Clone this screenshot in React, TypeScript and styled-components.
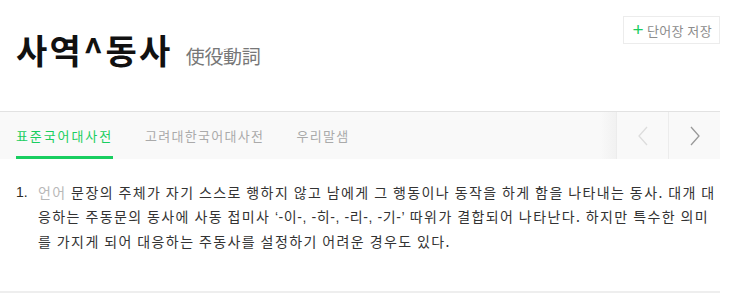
import React from 'react';
import styled, { createGlobalStyle } from 'styled-components';

const GlobalStyle = createGlobalStyle`
  html, body {
    margin: 0;
    padding: 0;
    background: #fff;
  }
  body {
    font-family: "Noto Sans CJK KR", "Noto Sans", sans-serif;
    color: #333;
  }
`;

const Page = styled.div`
  width: 720px;
`;

const Header = styled.header`
  display: flex;
  justify-content: space-between;
  align-items: flex-start;
  padding: 16px 0 0 16px;
  height: 111px;
  box-sizing: border-box;
`;

const TitleRow = styled.div`
  display: flex;
  align-items: baseline;
  padding-top: 12px;
`;

const Word = styled.h1`
  margin: 0;
  font-size: 34px;
  font-weight: 700;
  color: #111;
  line-height: 44px;
  letter-spacing: 2.3px;
`;

const Hanja = styled.span`
  margin-left: 13px;
  font-size: 19px;
  color: #777;
  letter-spacing: -0.3px;
`;

const SaveButton = styled.button`
  display: flex;
  align-items: center;
  gap: 3px;
  height: 28px;
  padding: 0 7px 0 8px;
  border: 1px solid #ececec;
  background: #fff;
  font-family: "Noto Sans CJK KR", sans-serif;
  font-size: 13px;
  letter-spacing: 0.4px;
  color: #8c8c8c;
  cursor: pointer;
`;

const Plus = styled.span`
  color: #19ce60;
  font-family: "Liberation Sans", Arial, sans-serif;
  font-size: 19px;
  line-height: 1;
  margin-top: -2px;
`;

const TabBar = styled.nav`
  display: flex;
  align-items: stretch;
  height: 47px;
  border-top: 1px solid #e2e2e2;
  background: #f9f9f9;
`;

const Tabs = styled.div`
  display: flex;
  flex: 1;
  padding-left: 16px;
  gap: 32px;
`;

const Tab = styled.a<{ $active?: boolean }>`
  display: flex;
  align-items: center;
  font-size: 13px;
  letter-spacing: ${(p) => (p.$active ? '1.9px' : '1.3px')};
  color: ${(p) => (p.$active ? '#19ce60' : '#aaa')};
  border-bottom: 3px solid ${(p) => (p.$active ? '#19ce60' : 'transparent')};
  border-top: 3px solid transparent;
  box-sizing: border-box;
  text-decoration: none;
`;

const Fade = styled.div`
  width: 16px;
  background: linear-gradient(to right, rgba(240, 240, 240, 0), rgba(236, 236, 236, 0.6));
`;

const ArrowButton = styled.button`
  width: 52px;
  border: 0;
  border-left: 1px solid #ececec;
  background: #f9f9f9;
  display: flex;
  align-items: center;
  justify-content: center;
  padding: 0;
`;

const Definition = styled.ol`
  margin: 0;
  padding: 21px 0 38px 16px;
  list-style: none;
  border-bottom: 2px solid #eee;
`;

const Item = styled.li`
  display: flex;
  font-size: 14px;
  line-height: 24px;
  color: #333;
`;

const Num = styled.span`
  flex: 0 0 22px;
  font-family: "Liberation Sans", Arial, sans-serif;
  font-size: 14px;
  color: #2e2e26;
`;

const Body = styled.p`
  margin: 0;
  flex: 1;
  letter-spacing: 1.4px;
  word-break: break-all;
`;

const Latin = styled.span`
  font-family: "Liberation Sans", "Noto Sans CJK KR", sans-serif;
  letter-spacing: 0.6px;
`;

const Tag = styled.span`
  color: #b8b8b8;
`;

const Chevron = ({ dir, color }: { dir: 'left' | 'right'; color: string }) => (
  <svg width="12" height="20" viewBox="0 0 12 20" fill="none">
    <path
      d={dir === 'left' ? 'M10 1 L2 10 L10 19' : 'M2 1 L10 10 L2 19'}
      stroke={color}
      strokeWidth="1.3"
    />
  </svg>
);

export default function App() {
  return (
    <>
      <GlobalStyle />
      <Page>
        <Header>
          <TitleRow>
            <Word>사역^동사</Word>
            <Hanja>使役動詞</Hanja>
          </TitleRow>
          <SaveButton>
            <Plus>+</Plus>단어장 저장
          </SaveButton>
        </Header>
        <TabBar>
          <Tabs>
            <Tab $active>표준국어대사전</Tab>
            <Tab>고려대한국어대사전</Tab>
            <Tab>우리말샘</Tab>
          </Tabs>
          <Fade />
          <ArrowButton aria-label="이전">
            <Chevron dir="left" color="#ddd" />
          </ArrowButton>
          <ArrowButton aria-label="다음">
            <Chevron dir="right" color="#999" />
          </ArrowButton>
        </TabBar>
        <Definition>
          <Item>
            <Num>1.</Num>
            <Body>
              <Tag>언어</Tag> 문장의 주체가 자기 스스로 행하지 않고 남에게 그 행동이나 동작을 하게
              함을 나타내는 동사. 대개 대응하는 주동문의 동사에 사동 접미사{' '}
              <Latin>‘-이-, -히-, -리-, -기-’</Latin> 따위가 결합되어 나타난다. 하지만 특수한
              의미를 가지게 되어 대응하는 주동사를 설정하기 어려운 경우도 있다.
            </Body>
          </Item>
        </Definition>
      </Page>
    </>
  );
}
